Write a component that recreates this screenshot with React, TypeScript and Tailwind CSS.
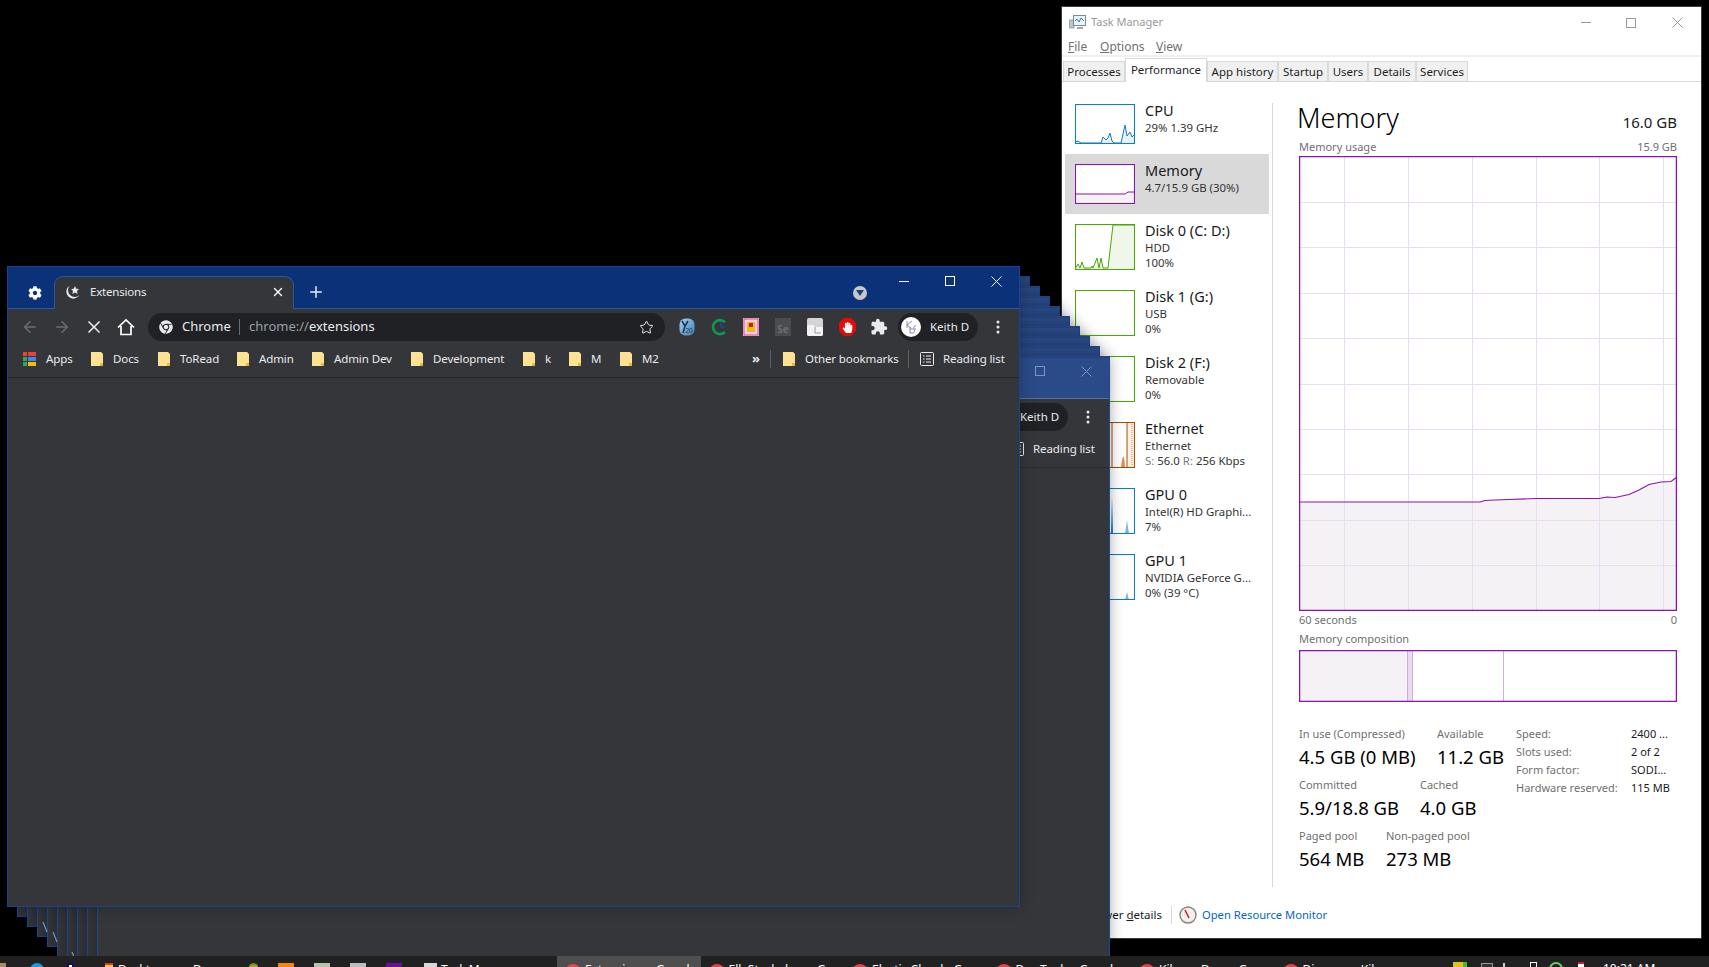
import React from "react";
import { ArrowLeft, ArrowRight, X, Plus, Star } from "lucide-react";
import { FaChrome, FaCog, FaHandPaper } from "react-icons/fa";
import { MdExtension } from "react-icons/md";

function CloseGlyph() {
  return (
    <svg width="11" height="11" viewBox="0 0 11 11" fill="none" stroke="currentColor" strokeWidth="1">
      <path d="M0.5 0.5L10.5 10.5M10.5 0.5L0.5 10.5" />
    </svg>
  );
}

function MaxGlyph() {
  return (
    <svg width="10" height="10" viewBox="0 0 10 10" fill="none" stroke="currentColor" strokeWidth="1">
      <rect x="0.5" y="0.5" width="9" height="9" />
    </svg>
  );
}

function MinGlyph() {
  return (
    <svg width="10" height="1" viewBox="0 0 10 1"><rect width="10" height="1" fill="currentColor" /></svg>
  );
}

function Caption({ dim }: { dim?: boolean }) {
  const c = dim ? "text-[#7f95bd] -mt-[2px]" : "text-white -mt-px";
  return (
    <div className={`flex items-center h-[30px] ${c}`}>
      <div className="w-[46px] flex justify-center">{dim ? null : <MinGlyph />}</div>
      <div className="w-[46px] flex justify-center"><MaxGlyph /></div>
      <div className="w-[46px] flex justify-center"><CloseGlyph /></div>
    </div>
  );
}

function Folder() {
  return (
    <svg width="12" height="14" viewBox="0 0 12 14" className="shrink-0">
      <path d="M0 0H10L12 2V14H0Z" fill="#fde293" />
      <path d="M9 14V11H12V14Z" fill="#e8b93f" />
    </svg>
  );
}

function ReadingIcon() {
  return (
    <svg width="14" height="14" viewBox="0 0 14 14" fill="none" stroke="#e8eaed" className="shrink-0">
      <rect x="0.5" y="0.5" width="13" height="13" rx="1" />
      <path d="M3 4H4.5M6 4H11M3 7H4.5M6 7H11M3 10H4.5M6 10H11" />
    </svg>
  );
}

function Pill() {
  return (
    <div className="w-[80px] h-[28px] rounded-full bg-[#202124] flex items-center pl-[3px]">
      <div className="w-[20px] h-[20px] rounded-full bg-white flex items-center justify-center shrink-0">
        <svg width="16" height="16" viewBox="0 0 16 16" fill="none" stroke="#7468a8" strokeWidth="0.8">
          <path d="M4 2V9M9 2L4 6L8 9M7 8V14H10C12 14 12 10 10 10H7M13 7C10 6 10 11 13 10" />
        </svg>
      </div>
      <span className="ml-[9px] text-[11.5px] text-[#e8eaed] whitespace-nowrap">Keith D</span>
    </div>
  );
}

function Dots() {
  return (
    <div className="w-[32px] flex justify-center">
      <svg width="4" height="14" viewBox="0 0 4 14" fill="#e8eaed">
        <circle cx="2" cy="2" r="1.5" />
        <circle cx="2" cy="7" r="1.5" />
        <circle cx="2" cy="12" r="1.5" />
      </svg>
    </div>
  );
}

function AppsIcon() {
  const colors = ["#ea4335", "#ea4335", "#ea4335", "#34a853", "#4285f4", "#4285f4", "#34a853", "#fbbc04", "#fbbc04"];
  return (
    <div className="grid grid-cols-3 gap-px w-[13px] h-[13px] shrink-0">
      {colors.map((c, i) => (
        <svg key={i} width="4" height="4"><rect width="4" height="4" fill={c} /></svg>
      ))}
    </div>
  );
}

const marks = [
  { name: "Docs", w: 67 },
  { name: "ToRead", w: 79 },
  { name: "Admin", w: 75 },
  { name: "Admin Dev", w: 99 },
  { name: "Development", w: 112 },
  { name: "k", w: 46 },
  { name: "M", w: 51 },
  { name: "M2", w: 40 },
];

function ExtIcons() {
  return (
    <>
      <div className="w-[32px] flex justify-center">
        <svg width="16" height="18" viewBox="0 0 16 18">
          <defs>
            <linearGradient id="yb" x1="0" y1="0" x2="1" y2="1">
              <stop offset="0" stopColor="#a8d0ea" />
              <stop offset="1" stopColor="#3f7fb8" />
            </linearGradient>
          </defs>
          <rect x="0.5" y="0.5" width="15" height="17" rx="6" fill="url(#yb)" />
          <path d="M3 3L6 8L4 15M9 3L6 8" stroke="#12355f" strokeWidth="1.5" fill="none" />
          <text x="6.5" y="15" fontSize="6.5" fill="#24344c" fontFamily="Liberation Sans">20</text>
        </svg>
      </div>
      <div className="w-[32px] flex justify-center">
        <svg width="16" height="18" viewBox="0 0 16 18" fill="none">
          <path d="M14 4.2A7 7 0 1 0 14 14" stroke="#0a9a50" strokeWidth="2.6" />
          <path d="M10 4V8C10 10 13 10 14 8" stroke="#1f4fa0" strokeWidth="1.2" />
        </svg>
      </div>
      <div className="w-[32px] flex justify-center">
        <svg width="16" height="18" viewBox="0 0 16 18">
          <rect width="16" height="18" fill="#f7cfe0" />
          <rect x="1" y="1" width="14" height="16" fill="none" stroke="#d84c8f" />
          <rect x="4" y="4" width="8" height="10" fill="#f2b71f" />
          <rect x="6" y="5" width="4" height="4" fill="#b3261e" />
        </svg>
      </div>
      <div className="w-[32px] flex items-center justify-center">
        <div className="relative w-[16px] h-[18px] bg-[#4b4c4e] text-[10px] leading-[22px] text-[#6a6b6d] text-center font-bold overflow-hidden">Se</div>
      </div>
      <div className="w-[32px] flex justify-center">
        <svg width="16" height="18" viewBox="0 0 16 18">
          <rect width="16" height="18" rx="2" fill="#d4d4d4" />
          <path d="M0 7H7L8 9H16V16C16 17 15 18 14 18H2C1 18 0 17 0 16Z" fill="#f3f3f3" />
          <path d="M8 9V15H14" fill="none" stroke="#9a9a9a" />
        </svg>
      </div>
      <div className="w-[32px] flex justify-center">
        <div className="relative w-[17px] h-[18px] flex items-center justify-center">
          <svg width="17" height="18" viewBox="0 0 17 18" className="absolute inset-0">
            <path d="M5 0H12L17 5V13L12 18H5L0 13V5Z" fill="#e00b0b" />
          </svg>
          <FaHandPaper className="relative text-white" size={11} />
        </div>
      </div>
      <div className="w-[32px] flex justify-center">
        <MdExtension className="text-[#e8eaed]" size={18} />
      </div>
    </>
  );
}

function MainChrome() {
  return (
    <div className="absolute left-[7px] top-[266px] w-[1013px] h-[641px] z-20 flex flex-col border border-[#1a4290] bg-[#35363a] shadow-[0_0_14px_rgba(0,0,0,0.25)] text-[#e8eaed]">
      <div className="h-[42px] bg-[#0b3278] border-b border-[#2f5797] flex justify-between shrink-0">
        <div className="flex items-end -mb-px">
          <div className="w-[46px] h-[33px] pl-[8px] flex items-center justify-center">
            <FaCog size={14} className="text-white" />
          </div>
          <div className="w-[240px] h-[33px] rounded-t-[9px] bg-[#35363a] border border-b-0 border-[#2f5797] flex items-center pl-[10px] pr-[8px] pb-[2px] text-[11.5px] tracking-[-0.2px]">
            <svg width="16" height="16" viewBox="0 0 16 16" className="shrink-0" fill="#e8eaed">
              <path d="M5 1.5A7 7 0 1 0 14.5 11A6 6 0 0 1 5 1.5Z" />
              <path d="M10 2L11.2 4.8L14 5L12 7L12.6 10L10 8.4L7.4 10L8 7L6 5L8.8 4.8Z" />
            </svg>
            <span className="ml-[9px]">Extensions</span>
            <X size={14} strokeWidth={2.4} className="ml-auto text-white" />
          </div>
          <div className="ml-[13px] h-[33px] pb-[2px] flex items-center"><Plus size={18} strokeWidth={2} className="text-[#e8eaed]" /></div>
        </div>
        <div className="flex">
          <div className="self-end mb-[8px] mr-[14px] w-[14px] h-[14px] rounded-full bg-[#c6c8cc] flex items-center justify-center">
            <svg width="8" height="6" viewBox="0 0 8 6"><path d="M0 0H8L4 6Z" fill="#20407a" /></svg>
          </div>
          <Caption />
        </div>
      </div>
      <div className="h-[36px] flex items-center shrink-0 pl-[6px]">
        <div className="w-[32px] flex justify-center"><ArrowLeft size={18} strokeWidth={2} className="text-[#6b6d70]" /></div>
        <div className="w-[32px] flex justify-center"><ArrowRight size={18} strokeWidth={2} className="text-[#6b6d70]" /></div>
        <div className="w-[32px] flex justify-center"><X size={20} strokeWidth={2} className="text-[#e8eaed]" /></div>
        <div className="w-[32px] flex justify-center">
          <svg width="18" height="18" viewBox="0 0 18 18" fill="none" stroke="#ffffff" strokeWidth="1.7">
            <path d="M1 9.5L9 2L17 9.5M4 8V16.5H14V8" />
          </svg>
        </div>
        <div className="ml-[6px] w-[517px] h-[28px] rounded-full bg-[#202124] flex items-center pl-[11px] pr-[11px] text-[13px]">
          <FaChrome size={14} className="text-[#e8eaed] shrink-0" />
          <span className="ml-[9px] w-[49px] whitespace-nowrap">Chrome</span>
          <div className="ml-[8px] w-px h-[16px] bg-[#6b6d70]" />
          <span className="ml-[9px] text-[#9aa0a6]">chrome://<span className="text-[#e8eaed]">extensions</span></span>
          <Star size={15} strokeWidth={1.6} className="ml-auto text-[#e8eaed]" />
        </div>
        <div className="ml-[6px] flex items-center"><ExtIcons /></div>
        <div className="ml-[3px]"><Pill /></div>
        <div className="ml-[4px]"><Dots /></div>
      </div>
      <div className="h-[33px] flex items-center pb-[5px] pl-[15px] pr-[14px] border-b border-[#28292c] text-[11.5px] tracking-[-0.1px] shrink-0">
        <div className="w-[68px] flex items-center shrink-0"><AppsIcon /><span className="ml-[10px]">Apps</span></div>
        {marks.map((m) => (
          <div key={m.name} className="flex items-center shrink-0" style={{ width: m.w }}>
            <Folder /><span className="ml-[10px] whitespace-nowrap">{m.name}</span>
          </div>
        ))}
        <div className="ml-auto flex items-center">
          <span className="w-[12px] text-[13px] leading-none font-bold text-center">»</span>
          <div className="ml-[8px] w-px h-[18px] bg-[#5f6063]" />
          <div className="ml-[12px]"><Folder /></div>
          <span className="ml-[10px] w-[92px] whitespace-nowrap">Other bookmarks</span>
          <div className="ml-[11px] w-px h-[18px] bg-[#5f6063]" />
          <div className="ml-[11px]"><ReadingIcon /></div>
          <span className="ml-[9px] w-[62px] whitespace-nowrap">Reading list</span>
        </div>
      </div>
      <div className="flex-1" />
    </div>
  );
}

function BackWindow({ k, last }: { k: number; last?: boolean }) {
  return (
    <div
      className="absolute w-[1013px] h-[641px] flex flex-col border border-[#1b4796] bg-[#35363a] shadow-[0_0_14px_rgba(0,0,0,0.3)] text-[#e8eaed]"
      style={{ left: 7 + 10 * k, top: 266 + 10 * k, zIndex: k }}
    >
      <div className="h-[42px] bg-[#2a4b88] border-t border-b border-t-[#2d4066] border-b-[#5273a8] flex justify-end shrink-0">
        {last ? <Caption dim /> : null}
      </div>
      {last ? (
        <>
          <div className="h-[36px] flex items-center justify-end pr-[5px] shrink-0">
            <Pill />
            <div className="ml-[4px]"><Dots /></div>
          </div>
          <div className="h-[33px] flex items-center justify-end pb-[5px] pr-[14px] border-b border-[#28292c] text-[11.5px] tracking-[-0.1px] shrink-0">
            <ReadingIcon />
            <span className="ml-[9px] w-[62px] whitespace-nowrap">Reading list</span>
          </div>
        </>
      ) : null}
    </div>
  );
}

function Thumb({ h, color, fill, points, children }: { h: number; color: string; fill?: string; points?: string; children?: React.ReactNode }) {
  return (
    <svg width="60" height={h} viewBox={`0 0 60 ${h}`} className="shrink-0">
      <rect width="60" height={h} fill="#ffffff" />
      {points ? <polygon points={`0,${h} ${points} 60,${h}`} fill={fill} /> : null}
      {points ? <polyline points={points} fill="none" stroke={color} strokeWidth="1" /> : null}
      {children}
      <rect x="0.5" y="0.5" width="59" height={h - 1} fill="none" stroke={color} strokeWidth="1.1" />
    </svg>
  );
}

const rows: { name: string; lines: React.ReactNode[]; h: number; thumb: React.ReactNode; sel?: boolean }[] = [
  {
    name: "CPU", lines: ["29%  1.39 GHz"], h: 60,
    thumb: <Thumb h={40} color="#117dbb" fill="#e8f2f8" points="0,38 3,37 6,39 26,39 28,33 31,36 33,34 35,29 37,37 39,39 46,39 48,30 50,21 52,32 55,28 57,33 60,30" />,
  },
  {
    name: "Memory", lines: ["4.7/15.9 GB (30%)"], h: 60, sel: true,
    thumb: <Thumb h={40} color="#8b12ae" fill="#f4f2f4" points="0,30 50,30 53,28 60,28" />,
  },
  {
    name: "Disk 0 (C: D:)", lines: ["HDD", "100%"], h: 66,
    thumb: <Thumb h={46} color="#4da60c" fill="#eff7e8" points="0,45 3,40 5,44 7,38 9,44 12,44 16,44 17,42 18,44 22,34 24,44 26,34 28,44 33,44 38,1 60,1" />,
  },
  { name: "Disk 1 (G:)", lines: ["USB", "0%"], h: 66, thumb: <Thumb h={46} color="#4da60c" /> },
  { name: "Disk 2 (F:)", lines: ["Removable", "0%"], h: 66, thumb: <Thumb h={46} color="#4da60c" /> },
  {
    name: "Ethernet",
    lines: ["Ethernet", <><span className="text-[#7a7a7a]">S:</span> 56.0 <span className="text-[#7a7a7a]">R:</span> 256 Kbps</>],
    h: 66,
    thumb: (
      <Thumb h={46} color="#a74f01">
        <rect x="52" y="0" width="8" height="46" fill="#fcf0e6" />
        <path d="M37 0V46M52 0V46" stroke="#a74f01" strokeWidth="1" />
        <path d="M46 46C47 36 49 26 50 46Z" fill="#d98f55" />
        <path d="M57 2V44" stroke="#d98f55" strokeDasharray="1 1" />
      </Thumb>
    ),
  },
  {
    name: "GPU 0", lines: ["Intel(R) HD Graphi...", "7%"], h: 66,
    thumb: <Thumb h={46} color="#117dbb"><path d="M36 46L37 8L38 46Z" fill="#117dbb" /><path d="M50 46L52 32L54 46Z" fill="#7fb6dc" /></Thumb>,
  },
  {
    name: "GPU 1", lines: ["NVIDIA GeForce G...", "0%  (39 °C)"], h: 66,
    thumb: <Thumb h={46} color="#117dbb"><path d="M50 46L52 38L54 46Z" fill="#7fb6dc" /></Thumb>,
  },
];

function MemoryChart() {
  const vs = [45, 109, 173, 237, 300, 364];
  const hs = [46, 91, 137, 182, 228, 273, 318, 364, 409];
  const line = "0,346 181,346 186,344.5 196,344 210,343.5 237,342.5 300,342.5 308,341 316,341.5 330,338.5 340,334 350,328.5 362,326 372,325.5 378,321";
  return (
    <svg width="378" height="455" viewBox="0 0 378 455" className="block">
      <polygon points={`0,455 ${line} 378,455`} fill="#f4f2f4" />
      {vs.map((x) => <path key={x} d={`M${x + 0.5} 0V455`} stroke="#ecdcf2" strokeWidth="1" />)}
      {hs.map((y) => <path key={y} d={`M0 ${y + 0.5}H378`} stroke="#ecdcf2" strokeWidth="1" />)}
      <polyline points={line} fill="none" stroke="#8b12ae" strokeWidth="1.1" />
      <rect x="0.6" y="0.6" width="376.8" height="453.8" fill="none" stroke="#8b12ae" strokeWidth="1.3" />
    </svg>
  );
}

function Composition() {
  return (
    <svg width="378" height="52" viewBox="0 0 378 52" className="block">
      <rect width="108" height="52" fill="#f4f2f4" />
      <rect x="108" width="5" height="52" fill="#eadcf0" />
      <path d="M108.5 0V52M113.5 0V52M204.5 0V52" stroke="#cfaede" strokeWidth="1" />
      <rect x="0.6" y="0.6" width="376.8" height="50.8" fill="none" stroke="#8b12ae" strokeWidth="1.3" />
    </svg>
  );
}

function Stat({ w, label, value }: { w: number; label: string; value: string }) {
  return (
    <div className="shrink-0" style={{ width: w }}>
      <div className="h-[16px] text-[11px] leading-4 text-[#707070] whitespace-nowrap">{label}</div>
      <div className="mt-[2px] h-[26px] text-[18.5px] leading-[26px] text-black whitespace-nowrap">{value}</div>
    </div>
  );
}

function TaskManager() {
  const tabs = [
    { t: "Processes", w: 62 },
    { t: "Performance", w: 82, a: true },
    { t: "App history", w: 71 },
    { t: "Startup", w: 50 },
    { t: "Users", w: 40 },
    { t: "Details", w: 48 },
    { t: "Services", w: 52 },
  ];
  const hw = [
    ["Speed:", "2400 ..."],
    ["Slots used:", "2 of 2"],
    ["Form factor:", "SODI..."],
    ["Hardware reserved:", "115 MB"],
  ];
  return (
    <div className="absolute left-[1061px] top-[6px] w-[641px] h-[933px] bg-white border border-[#3a3a3a] flex flex-col z-0">
      <div className="h-[31px] flex items-center pl-[7px] shrink-0">
        <svg width="17" height="15" viewBox="0 0 17 15" className="shrink-0">
          <rect x="0" y="5" width="5" height="8" fill="#b9c4c9" stroke="#7f8c92" strokeWidth="0.7" />
          <rect x="4.5" y="0.5" width="12" height="10" fill="#e9f3f8" stroke="#7d8b92" />
          <path d="M6 6L8 4L10 7L12 3L15 6" fill="none" stroke="#2c7fb8" />
          <path d="M8 13H14" stroke="#7d8b92" strokeWidth="1.5" />
        </svg>
        <span className="ml-[5px] text-[11px] text-[#999999]">Task Manager</span>
        <div className="ml-auto flex items-center text-[#999999]">
          <MinGlyph />
          <div className="ml-[35px] flex"><MaxGlyph /></div>
          <div className="ml-[36px] mr-[18px] flex"><CloseGlyph /></div>
        </div>
      </div>
      <div className="h-[19px] border-b-2 border-[#f0f0f0] flex items-center pl-[6px] text-[12px] text-[#6f6f6f] shrink-0">
        <span className="w-[32px]"><u>F</u>ile</span>
        <span className="w-[56px]"><u>O</u>ptions</span>
        <span><u>V</u>iew</span>
      </div>
      <div className="h-[25px] flex items-end pl-px border-b border-[#d9d9d9] text-[11.5px] text-[#1f1f1f] shrink-0">
        {tabs.map((t) =>
          t.a ? (
            <div key={t.t} className="h-[24px] -mb-px bg-white border border-b-0 border-[#d9d9d9] flex items-start pt-[2px] justify-center shrink-0" style={{ width: t.w }}>{t.t}</div>
          ) : (
            <div key={t.t} className="h-[20px] bg-[#f0f0f0] border border-b-0 border-[#d9d9d9] flex items-center justify-center shrink-0" style={{ width: t.w }}>{t.t}</div>
          )
        )}
      </div>
      <div className="flex flex-1 min-h-0">
        <div className="pl-[3px] pt-[12px] w-[207px] shrink-0">
          {rows.map((r) => (
            <div key={r.name} className={`w-[204px] flex items-start pl-[10px] pt-[10px] ${r.sel ? "bg-[#d9d9d9]" : ""}`} style={{ height: r.h }}>
              {r.thumb}
              <div className="ml-[10px] -mt-[4px] whitespace-nowrap">
                <div className="h-5 leading-5 text-[14.5px] text-[#1a1a1a]">{r.name}</div>
                {r.lines.map((l, i) => (
                  <div key={i} className="h-[14.5px] leading-[15px] text-[11.4px] text-[#333333]">{l}</div>
                ))}
              </div>
            </div>
          ))}
        </div>
        <div className="mt-[21px] ml-[3px] w-px h-[784px] bg-[#d9d9d9] shrink-0" />
        <div className="pl-[25px] w-[404px] pt-[18px]">
          <div className="flex justify-between items-end h-[36px] w-[379px]">
            <span className="-ml-px text-[27px] leading-[36px] font-light text-black">Memory</span>
            <span className="text-[15px] leading-[20px] text-[#1a1a1a] mb-[4px]">16.0 GB</span>
          </div>
          <div className="ml-px mt-[3px] h-[16px] flex justify-between text-[11px] leading-4 text-[#707070] w-[378px]">
            <span>Memory usage</span><span>15.9 GB</span>
          </div>
          <div className="ml-px mt-px"><MemoryChart /></div>
          <div className="ml-px mt-px h-[16px] flex justify-between text-[11px] leading-4 text-[#707070] w-[378px]">
            <span>60 seconds</span><span>0</span>
          </div>
          <div className="ml-px mt-[3px] h-[16px] text-[11px] leading-4 text-[#707070]">Memory composition</div>
          <div className="ml-px mt-[3px]"><Composition /></div>
          <div className="ml-px mt-[24px] flex w-[378px]">
            <div className="w-[217px] shrink-0">
              <div className="flex"><Stat w={138} label="In use (Compressed)" value="4.5 GB (0 MB)" /><Stat w={79} label="Available" value="11.2 GB" /></div>
              <div className="flex mt-[7px]"><Stat w={121} label="Committed" value="5.9/18.8 GB" /><Stat w={96} label="Cached" value="4.0 GB" /></div>
              <div className="flex mt-[7px]"><Stat w={87} label="Paged pool" value="564 MB" /><Stat w={130} label="Non-paged pool" value="273 MB" /></div>
            </div>
            <div className="-mt-px text-[11px] leading-[18px] whitespace-nowrap">
              {hw.map(([a, b]) => (
                <div key={a} className="flex">
                  <span className="w-[115px] text-[#707070]">{a}</span>
                  <span className="text-[#1a1a1a]">{b}</span>
                </div>
              ))}
            </div>
          </div>
        </div>
      </div>
      <div className="h-[44px] pb-[2px] flex items-center text-[11.5px] shrink-0">
        <span className="w-[100px] text-right text-[#1a1a1a] whitespace-nowrap">Fewer <u>d</u>etails</span>
        <div className="ml-[9px] w-px h-[18px] bg-[#d9d9d9]" />
        <svg width="18" height="18" viewBox="0 0 18 18" className="ml-[7px]">
          <circle cx="9" cy="9" r="8" fill="#f2f0ec" stroke="#8a8178" strokeWidth="1.4" />
          <path d="M6 4L10 12" stroke="#c4202a" strokeWidth="1.6" />
        </svg>
        <span className="ml-[5px] text-[11.2px] text-[#0066cc]">Open Resource Monitor</span>
      </div>
    </div>
  );
}

function TaskButton({ label, active }: { label: string; active?: boolean }) {
  return (
    <div className={`w-[143.5px] h-[30px] shrink-0 flex items-start pt-[6px] pl-[8px] ${active ? "bg-[#4e4e4e]" : ""}`}>
      <div className="w-[16px] h-[16px] rounded-full bg-[#db4a40] shrink-0 mt-[2px]" />
      <span className="ml-[4px] -mt-[2px] text-[12px] leading-[20px] text-white whitespace-nowrap overflow-hidden w-[115px]">{label}</span>
    </div>
  );
}

function Taskbar() {
  return (
    <div className="absolute left-0 right-0 top-[956px] h-[11px] z-30 bg-[#212121] overflow-hidden flex items-start text-white text-[12px]">
      <div className="w-[30px] h-[30px] shrink-0 pt-[7px]"><div className="w-[6px] h-[6px] bg-[#b08a5a]" /></div>
      <div className="w-[41px] shrink-0 pt-[7px]"><div className="w-[14px] h-[14px] rounded-t-full bg-[#1b9ae0]" /></div>
      <div className="w-[34px] shrink-0 pt-[7px]"><div className="w-[7px] h-[14px] bg-white border-2 border-[#101060] -ml-[4px]" /></div>
      <div className="w-[88px] shrink-0 flex pt-[7px]"><div className="w-[8px] h-[14px] bg-[#f5c542] border-t-2 border-[#d33]" /><span className="ml-[5px] -mt-[3px] leading-[20px]">Desktop</span></div>
      <div className="w-[56px] shrink-0 pt-[4px] leading-[20px]">Docs</div>
      <div className="w-[29px] shrink-0 pt-[7px]"><div className="w-[9px] h-[9px] rounded-full bg-[#e28a1c] border-t-2 border-[#3da33d]" /></div>
      <div className="w-[36px] shrink-0 pt-[7px]"><div className="w-[16px] h-[16px] bg-[#f5860b]" /></div>
      <div className="w-[36px] shrink-0 pt-[7px]"><div className="w-[16px] h-[16px] bg-[#b7c4ad]" /></div>
      <div className="w-[36px] shrink-0 pt-[7px]"><div className="w-[16px] h-[16px] bg-[#b9bec2]" /></div>
      <div className="w-[38px] shrink-0 pt-[7px]"><div className="w-[16px] h-[16px] bg-[#6a0f9c]" /></div>
      <div className="w-[133px] shrink-0 flex pt-[7px]"><div className="w-[13px] h-[12px] bg-[#d8d8d8]" /><span className="ml-[4px] -mt-[3px] leading-[20px]">Task Man</span></div>
      <TaskButton label="Extensions - Google" active />
      <TaskButton label="Elk Stack docs - Go" />
      <TaskButton label="Elastic Cloud - Goo" />
      <TaskButton label="Dev Tools - Google" />
      <TaskButton label="Kibana Docs - Goog" />
      <TaskButton label="Discover - Kibana" />
      <div className="w-[35px] shrink-0" />
      <div className="w-[28px] shrink-0 pt-[6px]"><div className="w-[14px] h-[10px] bg-[#e0c21a] border-r-4 border-[#3ac03a]" /></div>
      <div className="w-[20px] shrink-0 pt-[7px]"><div className="w-[12px] h-[8px] bg-[#333] border border-[#999]" /></div>
      <div className="w-[29px] shrink-0 pt-[7px]"><div className="ml-[2px] w-[2px] h-[8px] bg-[#ccc]" /></div>
      <div className="w-[23px] shrink-0 pt-[6px]"><div className="w-[7px] h-[8px] border border-white" /></div>
      <div className="w-[25px] shrink-0 pt-[6px]"><div className="w-[14px] h-[14px] rounded-full border-2 border-[#5fd35f] -ml-[4px]" /></div>
      <div className="w-[25px] shrink-0 pt-[6px]"><div className="w-[6px] h-[8px] bg-white border-t-2 border-[#c22]" /></div>
      <span className="pt-[3px] leading-[20px]">10:21 AM</span>
    </div>
  );
}

function Tick({ x, y }: { x: number; y: number }) {
  return (
    <svg width="6" height="12" viewBox="0 0 6 12" className="absolute z-10" style={{ left: x, top: y }}>
      <path d="M1 1L5 11" stroke="#6f9cc0" strokeWidth="1.2" />
    </svg>
  );
}

export default function App() {
  return (
    <div className="relative w-[1709px] h-[967px] bg-black overflow-hidden font-['Noto_Sans',sans-serif]">
      <TaskManager />
      {[1, 2, 3, 4, 5, 6, 7, 8].map((k) => <BackWindow key={k} k={k} />)}
      <BackWindow k={9} last />
      <Tick x={42} y={921} />
      <Tick x={52} y={931} />
      <Tick x={71} y={951} />
      <MainChrome />
      <Taskbar />
    </div>
  );
}
